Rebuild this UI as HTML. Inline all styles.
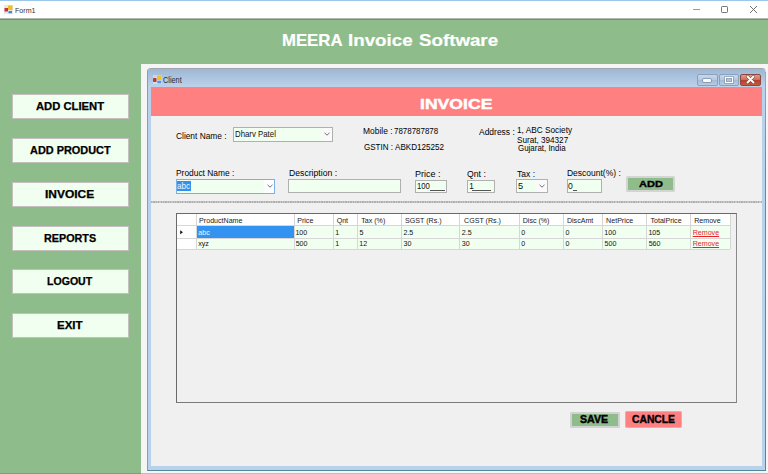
<!DOCTYPE html>
<html><head><meta charset="utf-8">
<style>
*{box-sizing:border-box;margin:0;padding:0}
html,body{width:768px;height:474px;overflow:hidden;background:#8FBC8B;font-family:"Liberation Sans",sans-serif;position:relative}
.a{position:absolute}
.t{position:absolute;white-space:pre;line-height:1}
#tb{left:0;top:0;width:768px;height:19px;background:#fff;border-top:1px solid #9cc6ea}
#tbl{left:0;top:18px;width:768px;height:2px;background:linear-gradient(#b4b8b4 50%,#778c76 50%)}
.sb{position:absolute;left:12px;width:117px;height:25px;background:#F0FFF0;border:1px solid #c4c0c0}
#frame{left:141px;top:64px;width:627px;height:409px;background:#f5f5f5}
#botline{left:0;top:473px;width:768px;height:1px;background:linear-gradient(90deg,#62a0b4 141px,#9cc8e2 141px)}
#win{left:147px;top:68px;width:619px;height:403px;border:1px solid #a2a6ac;border-left-color:#96999e;border-right-color:transparent;border-bottom-color:#4f8a9c;border-radius:4px 4px 0 0;background:#B9D1EA}
#cap{left:148px;top:69px;width:617px;height:18px;background:linear-gradient(#9db7d4,#bcd2ea);border-radius:3px 3px 0 0}
#content{left:151px;top:87px;width:611px;height:379px;background:#f0f0f0}
#pink{left:151px;top:87px;width:611px;height:29px;background:#FF8080}
.box{position:absolute;background:#F0FFF0;border:1px solid #b0b0b0}
.cbtn{border:1px solid #8aa0bc;border-radius:2px;background:linear-gradient(#c8d8ea 0%,#b4c8e0 50%,#a4bad6 52%,#b8cce4 100%)}
</style></head><body>
<div class="a" id="tb"></div>
<div class="a" id="tbl"></div>
<svg class="a" style="left:4px;top:5px" width="9" height="9" viewBox="0 0 9 9">
<rect x="0" y="0" width="9" height="9" fill="#e8e8e8"/>
<rect x="0.5" y="3" width="3.5" height="3.5" fill="#c83030"/>
<rect x="4" y="0.5" width="4.5" height="4.5" fill="#f0c020"/>
<rect x="4.5" y="6" width="3.5" height="2.3" fill="#4a80e0"/>
</svg>
<div class="t" style="left:15.24px;top:7.00px;font-size:8.1px;font-weight:normal;color:#333;letter-spacing:0.000px;transform:scaleX(0.8764);transform-origin:0 0;">Form1</div>
<div class="a" style="left:693px;top:9px;width:6.5px;height:1.3px;background:#999"></div>
<div class="a" style="left:721px;top:6px;width:7px;height:7px;border:1px solid #777;border-radius:1.2px"></div>
<svg class="a" style="left:750px;top:6px" width="7" height="7" viewBox="0 0 7 7"><path d="M0 0L7 7M7 0L0 7" stroke="#666" stroke-width="0.95"/></svg>
<div class="t" style="left:281.81px;top:32.00px;font-size:17px;font-weight:bold;color:#fff;letter-spacing:0.000px;-webkit-text-stroke:0.2px #fff;transform:scaleX(0.9850);transform-origin:0 0;">MEERA</div>
<div class="t" style="left:347.75px;top:32.00px;font-size:17px;font-weight:bold;color:#fff;letter-spacing:0.000px;-webkit-text-stroke:0.2px #fff;transform:scaleX(1.1035);transform-origin:0 0;">Invoice</div>
<div class="t" style="left:418.75px;top:32.00px;font-size:17px;font-weight:bold;color:#fff;letter-spacing:0.000px;-webkit-text-stroke:0.2px #fff;transform:scaleX(1.1011);transform-origin:0 0;">Software</div>
<div class="sb" style="top:94px"></div>
<div class="sb" style="top:138px"></div>
<div class="sb" style="top:182px"></div>
<div class="sb" style="top:226px"></div>
<div class="sb" style="top:269px"></div>
<div class="sb" style="top:313px"></div>
<div class="t" style="left:35.84px;top:102.00px;font-size:10px;font-weight:bold;color:#000;letter-spacing:0.000px;-webkit-text-stroke:0.25px #000;transform:scaleX(1.1245);transform-origin:0 0;">ADD CLIENT</div>
<div class="t" style="left:29.55px;top:146.00px;font-size:10px;font-weight:bold;color:#000;letter-spacing:0.000px;-webkit-text-stroke:0.25px #000;transform:scaleX(1.0918);transform-origin:0 0;">ADD PRODUCT</div>
<div class="t" style="left:45.13px;top:190.00px;font-size:10px;font-weight:bold;color:#000;letter-spacing:0.000px;-webkit-text-stroke:0.25px #000;transform:scaleX(1.1963);transform-origin:0 0;">INVOICE</div>
<div class="t" style="left:44.02px;top:234.00px;font-size:10px;font-weight:bold;color:#000;letter-spacing:0.000px;-webkit-text-stroke:0.25px #000;transform:scaleX(1.0783);transform-origin:0 0;">REPORTS</div>
<div class="t" style="left:46.83px;top:277.00px;font-size:10px;font-weight:bold;color:#000;letter-spacing:0.000px;-webkit-text-stroke:0.25px #000;transform:scaleX(1.0560);transform-origin:0 0;">LOGOUT</div>
<div class="t" style="left:56.96px;top:321.00px;font-size:10px;font-weight:bold;color:#000;letter-spacing:0.000px;-webkit-text-stroke:0.25px #000;transform:scaleX(1.1512);transform-origin:0 0;">EXIT</div>
<div class="a" id="frame"></div>
<div class="a" id="botline"></div>
<div class="a" id="win"></div>
<div class="a" id="cap"></div>
<div class="a" style="left:765px;top:72px;width:1px;height:399px;background:linear-gradient(#98aabb,#5a90a2 25%,#4f8a9c)"></div>
<div class="a" id="content"></div>
<div class="a" id="pink"></div>
<svg class="a" style="left:153px;top:75px" width="9" height="9" viewBox="0 0 9 9">
<rect x="0" y="0" width="9" height="9" fill="#dfe6ee" opacity="0.6"/>
<rect x="0" y="3" width="3.5" height="4" rx="0.8" fill="#c03a2a"/>
<rect x="4" y="0.5" width="4.5" height="4.5" rx="0.5" fill="#f2c21c"/>
<rect x="4.3" y="5.8" width="3.8" height="2.4" rx="0.5" fill="#5b90e6"/>
</svg>
<div class="t" style="left:163.45px;top:77.00px;font-size:8.2px;font-weight:normal;color:#1e2a3a;letter-spacing:0.000px;transform:scaleX(0.8927);transform-origin:0 0;">Client</div>
<div class="a cbtn" style="left:697px;top:74px;width:20.5px;height:11.8px"></div>
<div class="a cbtn" style="left:719px;top:74px;width:20px;height:11.8px"></div>
<div class="a" style="left:740px;top:74px;width:21px;height:11.8px;border:1px solid #8a4a40;border-radius:2px;background:linear-gradient(#e39a88 0%,#d0705c 45%,#b8402a 55%,#c45a40 100%)"></div>
<div class="a" style="left:703px;top:79px;width:8px;height:2.5px;background:#fbfcfe;box-shadow:0 0 0 0.8px #7d8ea8;border-radius:1px"></div>
<div class="a" style="left:725px;top:76.5px;width:8px;height:6.5px;border:1.6px solid #fff;box-shadow:0 0 0 0.6px #8090a8,inset 0 0 0 0.6px #8090a8;background:#b0c4dc"></div>
<svg class="a" style="left:745px;top:75px" width="11" height="9" viewBox="0 0 11 9"><path d="M2.5 1.5L8.5 7.5M8.5 1.5L2.5 7.5" stroke="#7a3a30" stroke-width="3" stroke-linecap="round"/><path d="M2.5 1.5L8.5 7.5M8.5 1.5L2.5 7.5" stroke="#fff" stroke-width="2" stroke-linecap="round"/></svg>
<div class="t" style="left:420.05px;top:96.00px;font-size:15px;font-weight:bold;color:#fff;letter-spacing:0.000px;-webkit-text-stroke:0.45px #fff;transform:scaleX(1.1743);transform-origin:0 0;">INVOICE</div>
<div class="t" style="left:176.21px;top:132.00px;font-size:8.5px;font-weight:normal;color:#000;letter-spacing:0.000px;transform:scaleX(0.9811);transform-origin:0 0;">Client Name :</div>
<div class="box" style="left:233px;top:127.3px;width:100px;height:14.5px;background:linear-gradient(90deg,#F0FFF0 88px,#fafafa 88px)"></div>
<div class="t" style="left:234.80px;top:130.00px;font-size:8.4px;font-weight:normal;color:#111;letter-spacing:0.000px;transform:scaleX(0.9341);transform-origin:0 0;">Dharv Patel</div>
<svg class="a" style="left:324px;top:132px" width="6" height="4" viewBox="0 0 6 4"><path d="M0.5 0.8L3 3.2L5.5 0.8" fill="none" stroke="#606060" stroke-width="0.9"/></svg>
<div class="t" style="left:363.36px;top:127.00px;font-size:8.5px;font-weight:normal;color:#000;letter-spacing:0.000px;transform:scaleX(0.9912);transform-origin:0 0;">Mobile :</div>
<div class="t" style="left:393.73px;top:127.00px;font-size:8.5px;font-weight:normal;color:#000;letter-spacing:0.000px;transform:scaleX(0.9333);transform-origin:0 0;">7878787878</div>
<div class="t" style="left:363.63px;top:143.00px;font-size:8.5px;font-weight:normal;color:#000;letter-spacing:0.000px;transform:scaleX(0.9424);transform-origin:0 0;">GSTIN :</div>
<div class="t" style="left:394.60px;top:143.00px;font-size:8.5px;font-weight:normal;color:#000;letter-spacing:0.000px;transform:scaleX(0.9522);transform-origin:0 0;">ABKD125252</div>
<div class="t" style="left:479.30px;top:128.00px;font-size:8.5px;font-weight:normal;color:#000;letter-spacing:0.000px;transform:scaleX(0.9957);transform-origin:0 0;">Address :</div>
<div class="t" style="left:516.97px;top:126.00px;font-size:8.5px;font-weight:normal;color:#000;letter-spacing:0.000px;transform:scaleX(0.9714);transform-origin:0 0;">1, ABC Society</div>
<div class="t" style="left:517.42px;top:136.00px;font-size:8.5px;font-weight:normal;color:#000;letter-spacing:0.000px;transform:scaleX(0.9581);transform-origin:0 0;">Surat, 394327</div>
<div class="t" style="left:518.23px;top:144.00px;font-size:8.5px;font-weight:normal;color:#000;letter-spacing:0.000px;transform:scaleX(0.9327);transform-origin:0 0;">Gujarat, India</div>
<div class="t" style="left:175.96px;top:169.00px;font-size:8.5px;font-weight:normal;color:#000;letter-spacing:0.000px;transform:scaleX(0.9878);transform-origin:0 0;">Product Name :</div>
<div class="box" style="left:175.6px;top:179.4px;width:99.4px;height:14.2px;border-color:#7ab0e8;background:linear-gradient(90deg,#F0FFF0 86.5px,#fdfdfd 86.5px)"></div>
<div class="a" style="left:177px;top:181px;width:13.5px;height:10px;background:#3390ee"></div>
<div class="t" style="left:177.26px;top:182.00px;font-size:8.4px;font-weight:normal;color:#f4f8ff;letter-spacing:0.000px;transform:scaleX(0.9615);transform-origin:0 0;">abc</div>
<svg class="a" style="left:266.5px;top:184px" width="6" height="4" viewBox="0 0 6 4"><path d="M0.5 0.8L3 3.2L5.5 0.8" fill="none" stroke="#606060" stroke-width="0.9"/></svg>
<div class="t" style="left:288.54px;top:169.00px;font-size:8.5px;font-weight:normal;color:#000;letter-spacing:0.000px;transform:scaleX(1.0186);transform-origin:0 0;">Description :</div>
<div class="box" style="left:288px;top:179px;width:112.5px;height:14px"></div>
<div class="t" style="left:414.91px;top:170.00px;font-size:8.5px;font-weight:normal;color:#000;letter-spacing:0.000px;transform:scaleX(1.0593);transform-origin:0 0;">Price :</div>
<div class="box" style="left:415px;top:179.5px;width:31.5px;height:13.5px"></div>
<div class="t" style="left:417.13px;top:183.00px;font-size:8.2px;font-weight:normal;color:#111;letter-spacing:0.000px;transform:scaleX(0.9462);transform-origin:0 0;">100</div>
<div class="a" style="left:430px;top:190px;width:15px;height:1px;background:#555"></div>
<div class="t" style="left:467.39px;top:170.00px;font-size:8.5px;font-weight:normal;color:#000;letter-spacing:0.000px;transform:scaleX(1.0203);transform-origin:0 0;">Qnt :</div>
<div class="box" style="left:467px;top:179.5px;width:27.5px;height:13.5px"></div>
<div class="t" style="left:469.30px;top:183.00px;font-size:8.2px;font-weight:normal;color:#111;letter-spacing:0.000px;">1</div>
<div class="a" style="left:472px;top:190px;width:19px;height:1px;background:#555"></div>
<div class="t" style="left:517.05px;top:170.00px;font-size:8.5px;font-weight:normal;color:#000;letter-spacing:0.000px;transform:scaleX(1.0000);transform-origin:0 0;">Tax :</div>
<div class="box" style="left:516px;top:179.3px;width:31.5px;height:13.7px;background:linear-gradient(90deg,#F0FFF0 19px,#fafafa 19px)"></div>
<div class="t" style="left:518.22px;top:183.00px;font-size:8.2px;font-weight:normal;color:#111;letter-spacing:0.000px;transform:scaleX(1.1250);transform-origin:0 0;">5</div>
<svg class="a" style="left:538.5px;top:184px" width="6" height="4" viewBox="0 0 6 4"><path d="M0.5 0.8L3 3.2L5.5 0.8" fill="none" stroke="#606060" stroke-width="0.9"/></svg>
<div class="t" style="left:566.95px;top:169.00px;font-size:8.5px;font-weight:normal;color:#000;letter-spacing:0.000px;transform:scaleX(1.0000);transform-origin:0 0;">Descount(%) :</div>
<div class="box" style="left:566.5px;top:179.4px;width:35px;height:13.3px"></div>
<div class="t" style="left:568.04px;top:183.00px;font-size:8.2px;font-weight:normal;color:#111;letter-spacing:0.000px;transform:scaleX(1.0500);transform-origin:0 0;">0</div>
<div class="a" style="left:572.5px;top:190px;width:4.6px;height:1px;background:#555"></div>
<div class="a" style="left:626.2px;top:175.5px;width:49.3px;height:16.2px;background:#8FBC8B;border:2px solid #d4d4d4;border-radius:1.5px"></div>
<div class="t" style="left:638.67px;top:179.00px;font-size:9.9px;font-weight:bold;color:#000;letter-spacing:0.000px;-webkit-text-stroke:0.4px #000;transform:scaleX(1.1133);transform-origin:0 0;">ADD</div>
<div class="a" style="left:151px;top:201px;width:611px;height:1.8px;background:repeating-linear-gradient(90deg,#b0b0b0 0 1.3px,#c8c8c8 1.3px 2.4px)"></div>
<div class="a" style="left:176px;top:213px;width:561px;height:190px;border:1.3px solid #6a6a6a;border-right-color:#8a8a8a;border-bottom-color:#7a7a7a;background:#f0f0f0"></div>
<div class="a" style="left:177.3px;top:214.3px;width:553.1px;height:11.2px;background:#fff"></div>
<div class="a" style="left:177.3px;top:225.5px;width:18.7px;height:23.5px;background:#fff"></div>
<div class="a" style="left:196px;top:225.5px;width:534.4px;height:23.5px;background:#F0FFF0"></div>
<div class="a" style="left:196.5px;top:226px;width:97.9px;height:11.5px;background:#3393f0"></div>
<div class="a" style="left:177.3px;top:225.2px;width:553.1px;height:1px;background:#d6d6d6"></div>
<div class="a" style="left:177.3px;top:237.5px;width:553.1px;height:1px;background:#d6d6d6"></div>
<div class="a" style="left:177.3px;top:248.8px;width:553.1px;height:1px;background:#d6d6d6"></div>
<div class="a" style="left:195.5px;top:214.3px;width:1px;height:35px;background:#d6d6d6"></div>
<div class="a" style="left:293.9px;top:214.3px;width:1px;height:35px;background:#d6d6d6"></div>
<div class="a" style="left:333.1px;top:214.3px;width:1px;height:35px;background:#d6d6d6"></div>
<div class="a" style="left:357.0px;top:214.3px;width:1px;height:35px;background:#d6d6d6"></div>
<div class="a" style="left:401.3px;top:214.3px;width:1px;height:35px;background:#d6d6d6"></div>
<div class="a" style="left:459.4px;top:214.3px;width:1px;height:35px;background:#d6d6d6"></div>
<div class="a" style="left:518.7px;top:214.3px;width:1px;height:35px;background:#d6d6d6"></div>
<div class="a" style="left:563.0px;top:214.3px;width:1px;height:35px;background:#d6d6d6"></div>
<div class="a" style="left:602.0px;top:214.3px;width:1px;height:35px;background:#d6d6d6"></div>
<div class="a" style="left:646.2px;top:214.3px;width:1px;height:35px;background:#d6d6d6"></div>
<div class="a" style="left:690.0px;top:214.3px;width:1px;height:35px;background:#d6d6d6"></div>
<div class="a" style="left:729.9px;top:214.3px;width:1px;height:35px;background:#d6d6d6"></div>
<div class="t" style="left:199.10px;top:218.00px;font-size:7.1px;font-weight:normal;color:#222;letter-spacing:0.000px;">ProductName</div>
<div class="t" style="left:297.20px;top:218.00px;font-size:7.1px;font-weight:normal;color:#222;letter-spacing:0.000px;">Price</div>
<div class="t" style="left:336.65px;top:218.00px;font-size:7.1px;font-weight:normal;color:#222;letter-spacing:0.000px;">Qnt</div>
<div class="t" style="left:361.25px;top:218.00px;font-size:7.1px;font-weight:normal;color:#222;letter-spacing:0.000px;">Tax (%)</div>
<div class="t" style="left:405.05px;top:218.00px;font-size:7.1px;font-weight:normal;color:#222;letter-spacing:0.000px;">SGST (Rs.)</div>
<div class="t" style="left:464.05px;top:218.00px;font-size:7.1px;font-weight:normal;color:#222;letter-spacing:0.000px;">CGST (Rs.)</div>
<div class="t" style="left:522.70px;top:218.00px;font-size:7.1px;font-weight:normal;color:#222;letter-spacing:0.000px;">Disc (%)</div>
<div class="t" style="left:566.90px;top:218.00px;font-size:7.1px;font-weight:normal;color:#222;letter-spacing:0.000px;">DiscAmt</div>
<div class="t" style="left:606.10px;top:218.00px;font-size:7.1px;font-weight:normal;color:#222;letter-spacing:0.000px;">NetPrice</div>
<div class="t" style="left:650.45px;top:218.00px;font-size:7.1px;font-weight:normal;color:#222;letter-spacing:0.000px;">TotalPrice</div>
<div class="t" style="left:694.20px;top:218.00px;font-size:7.1px;font-weight:normal;color:#222;letter-spacing:0.000px;">Remove</div>
<div class="t" style="left:198.25px;top:230.00px;font-size:7.1px;font-weight:normal;color:#f0f6ff;letter-spacing:0.000px;">abc</div>
<div class="t" style="left:295.40px;top:230.00px;font-size:7.1px;font-weight:normal;color:#111;letter-spacing:0.000px;">100</div>
<div class="t" style="left:335.20px;top:230.00px;font-size:7.1px;font-weight:normal;color:#111;letter-spacing:0.000px;">1</div>
<div class="t" style="left:359.55px;top:230.00px;font-size:7.1px;font-weight:normal;color:#111;letter-spacing:0.000px;">5</div>
<div class="t" style="left:403.45px;top:230.00px;font-size:7.1px;font-weight:normal;color:#111;letter-spacing:0.000px;">2.5</div>
<div class="t" style="left:461.75px;top:230.00px;font-size:7.1px;font-weight:normal;color:#111;letter-spacing:0.000px;">2.5</div>
<div class="t" style="left:521.15px;top:230.00px;font-size:7.1px;font-weight:normal;color:#111;letter-spacing:0.000px;">0</div>
<div class="t" style="left:565.45px;top:230.00px;font-size:7.1px;font-weight:normal;color:#111;letter-spacing:0.000px;">0</div>
<div class="t" style="left:604.30px;top:230.00px;font-size:7.1px;font-weight:normal;color:#111;letter-spacing:0.000px;">100</div>
<div class="t" style="left:648.40px;top:230.00px;font-size:7.1px;font-weight:normal;color:#111;letter-spacing:0.000px;">105</div>
<div class="t" style="left:692.70px;top:230.00px;font-size:7.1px;font-weight:normal;color:#e8242a;letter-spacing:0.000px;text-decoration:underline;text-decoration-thickness:0.7px;text-underline-offset:1px;">Remove</div>
<div class="t" style="left:198.25px;top:241.00px;font-size:7.1px;font-weight:normal;color:#111;letter-spacing:0.000px;">xyz</div>
<div class="t" style="left:295.65px;top:241.00px;font-size:7.1px;font-weight:normal;color:#111;letter-spacing:0.000px;">500</div>
<div class="t" style="left:335.20px;top:241.00px;font-size:7.1px;font-weight:normal;color:#111;letter-spacing:0.000px;">1</div>
<div class="t" style="left:359.30px;top:241.00px;font-size:7.1px;font-weight:normal;color:#111;letter-spacing:0.000px;">12</div>
<div class="t" style="left:403.45px;top:241.00px;font-size:7.1px;font-weight:normal;color:#111;letter-spacing:0.000px;">30</div>
<div class="t" style="left:461.75px;top:241.00px;font-size:7.1px;font-weight:normal;color:#111;letter-spacing:0.000px;">30</div>
<div class="t" style="left:521.15px;top:241.00px;font-size:7.1px;font-weight:normal;color:#111;letter-spacing:0.000px;">0</div>
<div class="t" style="left:565.45px;top:241.00px;font-size:7.1px;font-weight:normal;color:#111;letter-spacing:0.000px;">0</div>
<div class="t" style="left:604.55px;top:241.00px;font-size:7.1px;font-weight:normal;color:#111;letter-spacing:0.000px;">500</div>
<div class="t" style="left:648.65px;top:241.00px;font-size:7.1px;font-weight:normal;color:#111;letter-spacing:0.000px;">560</div>
<div class="t" style="left:692.70px;top:241.00px;font-size:7.1px;font-weight:normal;color:#e8242a;letter-spacing:0.000px;text-decoration:underline;text-decoration-thickness:0.7px;text-underline-offset:1px;">Remove</div>
<svg class="a" style="left:179.6px;top:230.3px" width="4" height="5" viewBox="0 0 4 5"><path d="M0.2 0.2L2.9 2.2L0.2 4.2Z" fill="#111"/></svg>
<div class="a" style="left:570.3px;top:411.5px;width:49.6px;height:16.2px;background:#8FBC8B;border:2px solid #d2d2d2;border-radius:1.5px"></div>
<div class="t" style="left:580.14px;top:415.00px;font-size:10.2px;font-weight:bold;color:#000;letter-spacing:0.000px;-webkit-text-stroke:0.4px #000;transform:scaleX(1.0415);transform-origin:0 0;">SAVE</div>
<div class="a" style="left:625px;top:411.2px;width:56.5px;height:16.5px;background:#FF8080;border:1.7px solid #9cc6ee;border-radius:1.5px"></div>
<div class="t" style="left:631.69px;top:415.00px;font-size:10.2px;font-weight:bold;color:#000;letter-spacing:0.000px;-webkit-text-stroke:0.4px #000;transform:scaleX(1.0120);transform-origin:0 0;">CANCLE</div>
</body></html>
